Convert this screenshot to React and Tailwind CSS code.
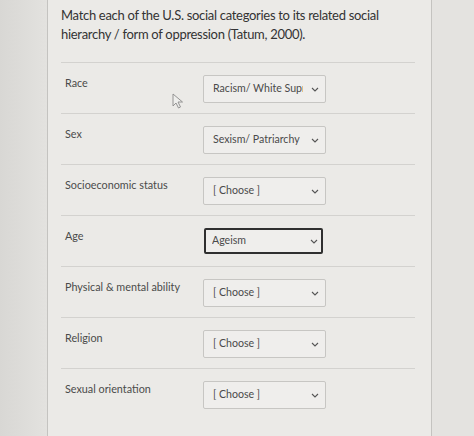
import React from "react";

const rows = [
  { label: "Race", value: "Racism/ White Supre" },
  { label: "Sex", value: "Sexism/ Patriarchy" },
  { label: "Socioeconomic status", value: "[ Choose ]" },
  { label: "Age", value: "Ageism", focused: true },
  { label: "Physical & mental ability", value: "[ Choose ]" },
  { label: "Religion", value: "[ Choose ]" },
  { label: "Sexual orientation", value: "[ Choose ]" },
];

const Chevron = () => (
  <svg width="8" height="5" viewBox="0 0 8 5" fill="none" className="shrink-0">
    <path d="M1 1l3 3 3-3" stroke="#555" strokeWidth="1.1" />
  </svg>
);

const Select = ({ value, focused }) => (
  <div
    className={
      focused
        ? "flex items-center justify-between gap-[8px] w-[119px] h-[26px] ml-[1px] pl-[6px] pr-[3px] rounded-[2px] border-2 border-[#2f2f2f] bg-[#efeeec]"
        : "flex items-center justify-between gap-[8px] w-[123px] h-[28px] pl-[9px] pr-[6px] rounded-[2px] border border-[#c7c6c3] bg-[#efeeec]"
    }
  >
    <span className="min-w-0 text-[10.6px] text-[#4a4a4a] whitespace-nowrap overflow-hidden">{value}</span>
    <Chevron />
  </div>
);

export default function App() {
  return (
    <div
      className="w-[474px] h-[436px] flex overflow-hidden bg-[#e2e1de]"
      style={{ fontFamily: "Lato, 'Open Sans', sans-serif" }}
    >
      {/* left gutter */}
      <div className="w-[47px] shrink-0 bg-gradient-to-r from-[#d8d7d4] to-[#e3e2df]" />

      {/* question panel */}
      <div className="relative w-[385px] shrink-0 border-x border-[#c4c3c0] bg-[#ebeae7] pl-[13px] pr-[16px] pt-[6px]">
        <p className="text-[13px] tracking-[-0.3px] leading-[19px] text-[#333] pr-2">
          Match each of the U.S. social categories to its related social hierarchy / form of oppression (Tatum, 2000).
        </p>

        <div className="mt-[18px]">
          {rows.map((r) => (
            <div key={r.label} className="flex h-[51px] border-t border-[#d3d2cf] pt-[12px]">
              <div className="w-[142px] pl-[4px] text-[10.8px] text-[#4a4a4a]">{r.label}</div>
              <Select value={r.value} focused={r.focused} />
            </div>
          ))}
        </div>

        {/* mouse pointer */}
        <svg
          className="absolute left-[124px] top-[93px]"
          width="12"
          height="16"
          viewBox="0 0 12 16"
          fill="none"
        >
          <path d="M1 1v12l3-3 2.5 5 2-1-2.5-5h4.5z" stroke="#8a8a8a" strokeWidth="0.9" fill="#eeeeec" />
        </svg>
      </div>

      {/* right gutter */}
      <div className="flex-1 bg-[#e4e3e0]" />
    </div>
  );
}
